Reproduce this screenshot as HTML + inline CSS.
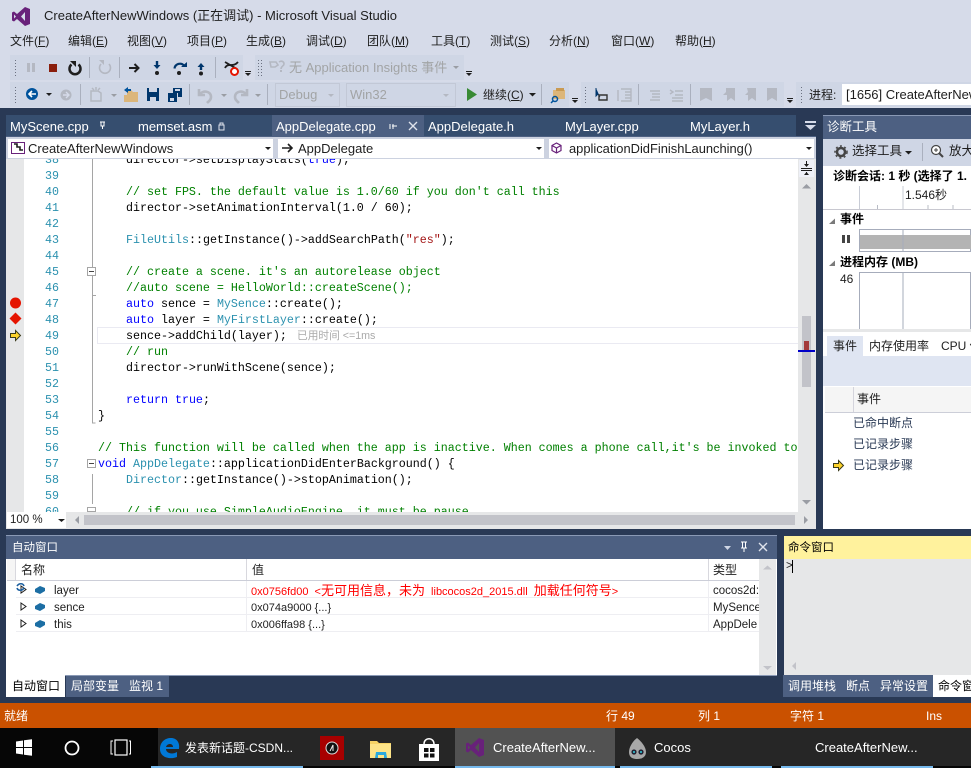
<!DOCTYPE html>
<html><head><meta charset="utf-8"><style>
html,body{margin:0;padding:0}
body{width:971px;height:768px;overflow:hidden;position:relative;background:#293955;font-family:"Liberation Sans","Noto Sans CJK SC",sans-serif;font-size:12px;color:#1e1e1e}
.b{position:absolute}
.t{position:absolute;white-space:nowrap;line-height:16px;height:16px}
u{text-decoration:underline}
.c{position:absolute;white-space:pre;font:11.67px/16px "Liberation Mono","Noto Sans CJK SC",monospace;color:#000;left:98px;width:700px;overflow:hidden}
.n{position:absolute;left:45px;font:11.67px/16px "Liberation Mono",monospace;color:#2b91af}
.g{color:#008000}.k{color:#0000ff}.y{color:#2b91af}.s{color:#a31515}
.w{color:#fff}.m{color:#1e1e1e}
.r{color:#1e1e1e;font-size:11.5px}
.v{color:#1e1e1e;font-size:11px}
#code{position:absolute;left:7px;top:159px;width:791px;height:353px;overflow:hidden;background:#e6e7e8}
#code>div{position:absolute;left:-7px;top:0;width:798px;height:353px}
</style></head><body>
<div class="b" style="left:0;top:0;width:971px;height:108px;background:#d6dbe9"></div>
<div class="b" style="left:10px;top:55px;width:454px;height:25px;background:#cfd6e5"></div>
<div class="b" style="left:243px;top:55px;width:12px;height:25px;background:#d6dbe9"></div>
<div class="b" style="left:464px;top:55px;width:10px;height:25px;background:#d6dbe9"></div>
<div class="b" style="left:10px;top:82px;width:961px;height:25px;background:#cfd6e5"></div>
<div class="b" style="left:569px;top:82px;width:12px;height:25px;background:#d6dbe9"></div>
<div class="b" style="left:784px;top:82px;width:12px;height:25px;background:#d6dbe9"></div>

<div class="t" style="left:44px;top:8px;font-size:13px">CreateAfterNewWindows (正在调试) - Microsoft Visual Studio</div>
<div class="t" style="left:10px;top:33px">文件(<u>F</u>)</div>
<div class="t" style="left:68px;top:33px">编辑(<u>E</u>)</div>
<div class="t" style="left:127px;top:33px">视图(<u>V</u>)</div>
<div class="t" style="left:187px;top:33px">项目(<u>P</u>)</div>
<div class="t" style="left:246px;top:33px">生成(<u>B</u>)</div>
<div class="t" style="left:306px;top:33px">调试(<u>D</u>)</div>
<div class="t" style="left:367px;top:33px">团队(<u>M</u>)</div>
<div class="t" style="left:431px;top:33px">工具(<u>T</u>)</div>
<div class="t" style="left:490px;top:33px">测试(<u>S</u>)</div>
<div class="t" style="left:549px;top:33px">分析(<u>N</u>)</div>
<div class="t" style="left:611px;top:33px">窗口(<u>W</u>)</div>
<div class="t" style="left:675px;top:33px">帮助(<u>H</u>)</div>
<div class="t" style="left:289px;top:60px;color:#a2a4a5;font-size:13px">无 Application Insights 事件</div>
<div class="b" style="left:275px;top:83px;width:63px;height:22px;border:1px solid #c2c8d6"></div>
<div class="b" style="left:346px;top:83px;width:108px;height:22px;border:1px solid #c2c8d6"></div>
<div class="t" style="left:279px;top:87px;color:#a2a4a5;font-size:13px">Debug</div>
<div class="t" style="left:350px;top:87px;color:#a2a4a5;font-size:13px">Win32</div>
<div class="t" style="left:483px;top:87px">继续(<u>C</u>)</div>
<div class="t" style="left:809px;top:87px">进程:</div>
<div class="b" style="left:842px;top:84px;width:129px;height:21px;background:#fff"></div>
<div class="t" style="left:846px;top:87px;font-size:13px">[1656] CreateAfterNew</div>

<!-- tabs -->
<div class="b" style="left:6px;top:115px;width:790px;height:22px;background:#364e6f"></div>
<div class="b" style="left:272px;top:115px;width:152px;height:22px;background:#4d6082"></div>
<div class="b" style="left:6px;top:136px;width:810px;height:2px;background:#4d6082"></div>
<div class="t w" style="left:10px;top:119px;font-size:13px">MyScene.cpp</div>
<div class="t w" style="left:138px;top:119px;font-size:13px">memset.asm</div>
<div class="t w" style="left:276px;top:119px;font-size:13px">AppDelegate.cpp</div>
<div class="t w" style="left:428px;top:119px;font-size:13px">AppDelegate.h</div>
<div class="t w" style="left:565px;top:119px;font-size:13px">MyLayer.cpp</div>
<div class="t w" style="left:690px;top:119px;font-size:13px">MyLayer.h</div>
<!-- nav bar -->
<div class="b" style="left:6px;top:137px;width:810px;height:23px;background:#ccd2e0"></div>
<div class="b" style="left:8px;top:139px;width:265px;height:19px;background:#fff"></div>
<div class="b" style="left:278px;top:139px;width:266px;height:19px;background:#fff"></div>
<div class="b" style="left:549px;top:139px;width:265px;height:19px;background:#fff"></div>
<div class="t" style="left:28px;top:141px;color:#1e1e1e;font-size:13px">CreateAfterNewWindows</div>
<div class="t" style="left:298px;top:141px;font-size:13px">AppDelegate</div>
<div class="t" style="left:569px;top:141px;font-size:12.9px">applicationDidFinishLaunching()</div>

<!-- editor -->
<div class="b" style="left:6px;top:159px;width:810px;height:370px;background:#e6e7e8"></div>
<div id="code"><div>
<div class="b" style="left:24px;top:0;width:774px;height:353px;background:#fff"></div>
<div class="b" style="left:97px;top:168px;width:701px;height:15px;border:1px solid #eaeaf2;border-right:0"></div>
<div class="n" style="top:-7px">38</div><div class="c" style="top:-7px">    director-&gt;setDisplayStats(<span class="k">true</span>);</div>
<div class="n" style="top:9px">39</div>
<div class="n" style="top:25px">40</div><div class="c g" style="top:25px">    // set FPS. the default value is 1.0/60 if you don't call this</div>
<div class="n" style="top:41px">41</div><div class="c" style="top:41px">    director-&gt;setAnimationInterval(1.0 / 60);</div>
<div class="n" style="top:57px">42</div>
<div class="n" style="top:73px">43</div><div class="c" style="top:73px">    <span class="y">FileUtils</span>::getInstance()-&gt;addSearchPath(<span class="s">"res"</span>);</div>
<div class="n" style="top:89px">44</div>
<div class="n" style="top:105px">45</div><div class="c g" style="top:105px">    // create a scene. it's an autorelease object</div>
<div class="n" style="top:121px">46</div><div class="c g" style="top:121px">    //auto scene = HelloWorld::createScene();</div>
<div class="n" style="top:137px">47</div><div class="c" style="top:137px">    <span class="k">auto</span> sence = <span class="y">MySence</span>::create();</div>
<div class="n" style="top:153px">48</div><div class="c" style="top:153px">    <span class="k">auto</span> layer = <span class="y">MyFirstLayer</span>::create();</div>
<div class="n" style="top:169px">49</div><div class="c" style="top:169px">    sence-&gt;addChild(layer);</div>
<div class="t" style="left:297px;top:169px;font-size:10.7px;color:#a9a9a9">已用时间 &lt;=1ms</div>
<div class="n" style="top:185px">50</div><div class="c g" style="top:185px">    // run</div>
<div class="n" style="top:201px">51</div><div class="c" style="top:201px">    director-&gt;runWithScene(sence);</div>
<div class="n" style="top:217px">52</div>
<div class="n" style="top:233px">53</div><div class="c" style="top:233px">    <span class="k">return true</span>;</div>
<div class="n" style="top:249px">54</div><div class="c" style="top:249px">}</div>
<div class="n" style="top:265px">55</div>
<div class="n" style="top:281px">56</div><div class="c g" style="top:281px">// This function will be called when the app is inactive. When comes a phone call,it's be invoked too</div>
<div class="n" style="top:297px">57</div><div class="c" style="top:297px"><span class="k">void</span> <span class="y">AppDelegate</span>::applicationDidEnterBackground() {</div>
<div class="n" style="top:313px">58</div><div class="c" style="top:313px">    <span class="y">Director</span>::getInstance()-&gt;stopAnimation();</div>
<div class="n" style="top:329px">59</div>
<div class="n" style="top:345px">60</div><div class="c g" style="top:345px">    // if you use SimpleAudioEngine, it must be pause</div>
</div></div>
<!-- zoom + hscroll -->
<div class="b" style="left:7px;top:512px;width:59px;height:16px;background:#fff"></div>
<div class="t" style="left:10px;top:512px;font-size:11.5px">100 %</div>
<div class="b" style="left:84px;top:515px;width:711px;height:10px;background:#c2c3c9"></div>
<div class="b" style="left:802px;top:316px;width:9px;height:71px;background:#c2c3c9"></div>
<div class="b" style="left:804px;top:341px;width:5px;height:11px;background:#a33b3b"></div>
<div class="b" style="left:798px;top:350px;width:17px;height:2px;background:#0000c8"></div>
<div class="b" style="left:799px;top:160px;width:15px;height:17px;background:#eef0f7"></div>

<!-- diagnostics -->
<div class="b" style="left:823px;top:115px;width:148px;height:414px;background:#fff"></div>
<div class="b" style="left:823px;top:115px;width:148px;height:24px;background:#4d6082;border-top:1px solid #8a99b5;box-sizing:border-box"></div>
<div class="t w" style="left:827px;top:119px;font-size:12.5px">诊断工具</div>
<div class="b" style="left:823px;top:139px;width:148px;height:27px;background:#cfd6e5"></div>
<div class="t" style="left:852px;top:143px;font-size:12.5px">选择工具</div>
<div class="t" style="left:949px;top:143px;font-size:12.5px">放大</div>
<div class="t" style="left:833px;top:168px;font-weight:bold;color:#000;font-size:12px">诊断会话: 1 秒 (选择了 1.</div>
<div class="t" style="left:905px;top:187px;font-size:12px">1.546秒</div>
<div class="b" style="left:823px;top:209px;width:148px;height:1px;background:#c8c8d0"></div>
<div class="t" style="left:840px;top:211px;font-weight:bold;font-size:12px;color:#000">事件</div>
<div class="b" style="left:859px;top:229px;width:112px;height:23px;border:1px solid #a6acbb;box-sizing:border-box"></div>
<div class="b" style="left:860px;top:235px;width:111px;height:14px;background:#b4b4b4"></div>
<div class="t" style="left:840px;top:254px;font-weight:bold;font-size:12px;color:#000">进程内存 (MB)</div>
<div class="t" style="left:840px;top:271px;font-size:12px">46</div>
<div class="b" style="left:859px;top:272px;width:112px;height:58px;border:1px solid #a6acbb;border-bottom:0;box-sizing:border-box"></div>
<div class="b" style="left:823px;top:329px;width:148px;height:3px;background:#e6e7e8"></div>
<div class="b" style="left:827px;top:336px;width:36px;height:20px;background:#dfe5f2"></div>
<div class="b" style="left:823px;top:356px;width:148px;height:30px;background:#dfe5f2"></div>
<div class="t" style="left:833px;top:338px;font-size:12px">事件</div>
<div class="t" style="left:869px;top:338px;font-size:12px">内存使用率</div>
<div class="t" style="left:941px;top:338px;font-size:12px">CPU 使</div>
<div class="b" style="left:825px;top:387px;width:146px;height:25px;background:#f5f5f5;border-bottom:1px solid #ccced8"></div>
<div class="b" style="left:853px;top:387px;width:1px;height:25px;background:#d4d4dc"></div>
<div class="t" style="left:857px;top:391px;font-size:12px">事件</div>
<div class="t" style="left:853px;top:415px;font-size:12px;color:#2a3a55">已命中断点</div>
<div class="t" style="left:853px;top:436px;font-size:12px;color:#2a3a55">已记录步骤</div>
<div class="t" style="left:853px;top:457px;font-size:12px;color:#2a3a55">已记录步骤</div>

<!-- autos -->
<div class="b" style="left:6px;top:535px;width:771px;height:141px;background:#fff"></div>
<div class="b" style="left:6px;top:535px;width:771px;height:24px;background:#4d6082;border-top:1px solid #8a99b5;box-sizing:border-box"></div>
<div class="t w" style="left:12px;top:540px;font-size:11.5px">自动窗口</div>
<div class="b" style="left:7px;top:559px;width:8px;height:21px;background:#f5f5f5"></div>
<div class="b" style="left:759px;top:559px;width:17px;height:116px;background:#e6e7e8"></div>
<div class="b" style="left:7px;top:580px;width:752px;height:1px;background:#ccced8"></div>
<div class="b" style="left:15px;top:559px;width:1px;height:21px;background:#d8d8de"></div>
<div class="b" style="left:246px;top:559px;width:1px;height:21px;background:#d8d8de"></div>
<div class="b" style="left:708px;top:559px;width:1px;height:21px;background:#d8d8de"></div>
<div class="b" style="left:246px;top:581px;width:1px;height:50px;background:#eeeef2"></div>
<div class="b" style="left:708px;top:581px;width:1px;height:50px;background:#eeeef2"></div>
<div class="b" style="left:16px;top:597px;width:743px;height:1px;background:#eeeef2"></div>
<div class="b" style="left:16px;top:614px;width:743px;height:1px;background:#eeeef2"></div>
<div class="b" style="left:16px;top:631px;width:743px;height:1px;background:#eeeef2"></div>
<div class="t" style="left:21px;top:562px;font-size:12px">名称</div>
<div class="t" style="left:252px;top:562px;font-size:12px">值</div>
<div class="t" style="left:713px;top:562px;font-size:12px">类型</div>
<div class="t r" style="left:54px;top:583px">layer</div>
<div class="t r" style="left:54px;top:600px">sence</div>
<div class="t r" style="left:54px;top:617px">this</div>
<div class="t" style="left:251px;top:583px;color:#f00;font-size:11px;word-spacing:3px">0x0756fd00 &lt;<span style="font-size:13px">无可用信息，未为</span> libcocos2d_2015.dll <span style="font-size:13px">加载任何符号</span>&gt;</div>
<div class="t v" style="left:251px;top:600px">0x074a9000 {...}</div>
<div class="t v" style="left:251px;top:617px">0x006ffa98 {...}</div>
<div class="b" style="left:713px;top:583px;width:46px;height:14px;overflow:hidden"><div class="t r" style="left:0;top:0">cocos2d::</div></div>
<div class="b" style="left:713px;top:600px;width:46px;height:14px;overflow:hidden"><div class="t r" style="left:0;top:0">MySence</div></div>
<div class="b" style="left:713px;top:617px;width:46px;height:14px;overflow:hidden"><div class="t r" style="left:0;top:0">AppDele</div></div>
<div class="b" style="left:66px;top:676px;width:103px;height:21px;background:#4d6082"></div>
<div class="b" style="left:6px;top:675px;width:771px;height:1px;background:#8a99b5"></div>
<div class="b" style="left:6px;top:675px;width:59px;height:22px;background:#fff"></div>
<div class="t" style="left:12px;top:678px;font-size:12px;color:#000">自动窗口</div>
<div class="t w" style="left:71px;top:678px;font-size:12px">局部变量</div>
<div class="t w" style="left:129px;top:678px;font-size:12px">监视 1</div>

<!-- command -->
<div class="b" style="left:784px;top:536px;width:187px;height:23px;background:#fff29d"></div>
<div class="t" style="left:788px;top:540px;font-size:11.5px;color:#000">命令窗口</div>
<div class="b" style="left:784px;top:559px;width:187px;height:116px;background:#e6e7e8"></div>
<div class="t" style="left:786px;top:558px;font-size:11.5px">&gt;</div>
<div class="b" style="left:792px;top:560px;width:1px;height:13px;background:#000"></div>
<div class="b" style="left:783px;top:675px;width:150px;height:22px;background:#4d6082"></div>
<div class="b" style="left:933px;top:675px;width:38px;height:22px;background:#fff"></div>
<div class="t w" style="left:788px;top:678px;font-size:12px">调用堆栈</div>
<div class="t w" style="left:846px;top:678px;font-size:12px">断点</div>
<div class="t w" style="left:880px;top:678px;font-size:12px">异常设置</div>
<div class="t" style="left:938px;top:678px;font-size:12px;color:#000">命令窗</div>

<!-- status -->
<div class="b" style="left:0;top:703px;width:971px;height:25px;background:#ca5100"></div>
<div class="t w" style="left:4px;top:708px;font-size:12px">就绪</div>
<div class="t w" style="left:606px;top:708px;font-size:12px">行 49</div>
<div class="t w" style="left:698px;top:708px;font-size:12px">列 1</div>
<div class="t w" style="left:790px;top:708px;font-size:12px">字符 1</div>
<div class="t w" style="left:926px;top:708px;font-size:12px">Ins</div>

<!-- taskbar -->
<div class="b" style="left:0;top:728px;width:971px;height:40px;background:#060606"></div>
<div class="b" style="left:158px;top:728px;width:813px;height:38px;background:#262626"></div>
<div class="b" style="left:455px;top:728px;width:160px;height:38px;background:#525252"></div>
<div class="b" style="left:151px;top:766px;width:152px;height:2px;background:#76b9ed"></div>
<div class="b" style="left:455px;top:766px;width:160px;height:2px;background:#76b9ed"></div>
<div class="b" style="left:620px;top:766px;width:152px;height:2px;background:#76b9ed"></div>
<div class="b" style="left:781px;top:766px;width:152px;height:2px;background:#76b9ed"></div>
<div class="t w" style="left:185px;top:740px;font-size:12px">发表新话题-CSDN...</div>
<div class="t w" style="left:493px;top:740px;font-size:13px">CreateAfterNew...</div>
<div class="t w" style="left:654px;top:740px;font-size:13px">Cocos</div>
<div class="t w" style="left:815px;top:740px;font-size:13px">CreateAfterNew...</div>

<svg class="b" style="left:0;top:0" width="971" height="768" viewBox="0 0 971 768">
<defs>
<pattern id="gr" width="3" height="3" patternUnits="userSpaceOnUse"><rect width="1" height="1" fill="#6b7180"/></pattern>
<g id="vs"><path fill-rule="evenodd" d="M13 0 18 2V17L13 19 5 12 2 14.500 0 13.500V5.500L2 4.500 5 7ZM2 7.500V11.500L4 9.500ZM13 5 9 9.500 13 14Z" fill="#68217a"/></g>
<g id="arrowy"><path d="M.5 3.500h5V.5L10.500 5.500l-5 5v-3h-5z" fill="#fcd22b" stroke="#3a3a1a" stroke-width="1"/></g>
</defs>
<use href="#vs" x="12" y="7"/>
<!-- grips -->
<rect x="13" y="58" width="4" height="19" fill="url(#gr)"/><rect x="258" y="58" width="4" height="19" fill="url(#gr)"/>
<rect x="13" y="85" width="4" height="19" fill="url(#gr)"/><rect x="584" y="85" width="4" height="19" fill="url(#gr)"/><rect x="799" y="85" width="4" height="19" fill="url(#gr)"/>
<!-- toolbar 1 -->
<rect x="27" y="63" width="3" height="9" fill="#b4b8c2"/><rect x="32" y="63" width="3" height="9" fill="#b4b8c2"/>
<rect x="49" y="64" width="8" height="8" fill="#8a1e0c"/>
<path d="M71.500 64.500a5.500 5.500 0 1 0 7 0" fill="none" stroke="#1e1e1e" stroke-width="2.500"/><path d="M70 61h6v6z" fill="#1e1e1e"/>
<path d="M101 64a5.500 5.500 0 1 0 8 0" fill="none" stroke="#b4b8c2" stroke-width="1.600"/><path d="M99 60h5v5z" fill="#b4b8c2"/>
<g stroke="#aab0be"><path d="M89.500 57v21M119.500 57v21M215.500 57v21"/></g>
<path d="M129 68h9M134.500 64l4 4-4 4" fill="none" stroke="#1e1e1e" stroke-width="2"/>
<path d="M157 61v5" stroke="#00366c" stroke-width="2.400"/><path d="M153.500 65h7l-3.500 4z" fill="#00366c"/><circle cx="157" cy="73" r="2" fill="#1e1e1e"/>
<path d="M174.500 68.500a5.500 5.500 0 0 1 9.500-3" fill="none" stroke="#00366c" stroke-width="2.200"/><path d="M181 67h6v-5z" fill="#00366c"/><circle cx="179" cy="73" r="2" fill="#1e1e1e"/>
<path d="M201 70v-4" stroke="#00366c" stroke-width="2.400"/><path d="M197.500 67h7l-3.500-4z" fill="#00366c"/><circle cx="201" cy="73.500" r="2" fill="#1e1e1e"/>
<path d="M225 62l12 7M225 68c3-6 8 0 13-6" fill="none" stroke="#1e1e1e" stroke-width="1.800"/><circle cx="234.500" cy="71.500" r="3.500" fill="#fff" stroke="#e51400" stroke-width="2"/>
<rect x="245" y="71" width="6" height="1" fill="#1e1e1e"/><path d="M245 73h6l-3 3z" fill="#1e1e1e"/>
<rect x="466" y="71" width="6" height="1" fill="#1e1e1e"/><path d="M466 73h6l-3 3z" fill="#1e1e1e"/>
<path d="M270 62h6l2 3-3 2h-4zM279 62c3-2 5 0 5 2s-3 2-3 5" fill="none" stroke="#b4b8c2" stroke-width="1.600"/><rect x="280" y="70" width="2" height="2" fill="#b4b8c2"/>
<path d="M453 66h6l-3 3z" fill="#9a9da4"/>
<!-- toolbar 2 -->
<circle cx="32" cy="94" r="6" fill="#00539c"/><path d="M36 94h-6M32 91l-3 3 3 3" fill="none" stroke="#fff" stroke-width="1.600"/>
<path d="M46 93h6l-3 3z" fill="#1e1e1e"/>
<circle cx="66" cy="95" r="5.500" fill="#b4b8c2"/><path d="M63 95h6M66 92l3 3-3 3" fill="none" stroke="#d6dbe9" stroke-width="1.400"/>
<g stroke="#aab0be"><path d="M80.500 84v21M189.500 84v21M267.500 84v21M541.500 84v21M638.500 84v21M690.500 84v21"/></g>
<path d="M91 91h7l3 2v8h-10zM96 87v3M92 88l2 2M100 88l-2 2" fill="none" stroke="#b4b8c2" stroke-width="1.500"/>
<path d="M111 94h6l-3 3z" fill="#9a9da4"/>
<path d="M127 90h4l2 2h5v3h-11z" fill="#dcb67a"/><path d="M124 102v-7h14v7z" fill="#dcb67a"/><path d="M124 90l4-3v2h3v2h-3v2z" fill="#00539c"/>
<path d="M147 88h12v13h-12z" fill="#00366c"/><rect x="149" y="88" width="8" height="4" fill="#cfd6e5"/><rect x="150" y="97" width="6" height="4" fill="#cfd6e5"/>
<path d="M168 93h9v9h-9z" fill="#00366c"/><path d="M173 88h9v9h-4v-4h-5z" fill="#00366c"/><rect x="170" y="98" width="4" height="3" fill="#cfd6e5"/><rect x="175" y="89" width="5" height="2" fill="#cfd6e5"/>
<path d="M199 89v6h6" fill="none" stroke="#b4b8c2" stroke-width="2.600"/><path d="M200 94c3-4 11-3 11 3 0 3-2 4-4 6" fill="none" stroke="#b4b8c2" stroke-width="2.600"/>
<path d="M221 94h6l-3 3z" fill="#9a9da4"/>
<path d="M247 89v6h-6" fill="none" stroke="#b4b8c2" stroke-width="2.600"/><path d="M246 94c-3-4-11-3-11 3 0 3 2 4 4 6" fill="none" stroke="#b4b8c2" stroke-width="2.600"/>
<path d="M255 94h6l-3 3z" fill="#9a9da4"/>
<path d="M328 94h6l-3 3z" fill="#b4b8c2"/><path d="M443 94h6l-3 3z" fill="#b4b8c2"/>
<path d="M467 88l10 6.500-10 6.500z" fill="#388a34"/>
<path d="M529 93h7l-3.500 3.500z" fill="#1e1e1e"/>
<rect x="553" y="90" width="12" height="9" fill="#dcb67a"/><rect x="556" y="88" width="8" height="3" fill="#c99a52"/><circle cx="555" cy="99" r="2.500" fill="none" stroke="#00539c" stroke-width="1.500"/><path d="M553 101l-2 2" stroke="#00539c" stroke-width="1.500"/>
<rect x="572" y="98" width="6" height="1" fill="#1e1e1e"/><path d="M572 100h6l-3 3z" fill="#1e1e1e"/>
<rect x="787" y="98" width="6" height="1" fill="#1e1e1e"/><path d="M787 100h6l-3 3z" fill="#1e1e1e"/>
<path d="M596 88v8l2-2 2 3" fill="#00366c" stroke="#00366c"/><path d="M599 95h8v5h-8z" fill="none" stroke="#333" stroke-width="1.400"/>
<g fill="none" stroke="#b4b8c2" stroke-width="1.400"><path d="M618 90v11M621 89h10v12h-10M625 92h6M625 95h6M625 98h6"/><path d="M650 91h10M652 94h8M652 97h8M650 100h10"/><path d="M670 90l3 2-3 2M675 91h8M675 95h8M672 98h11M672 101h11"/></g>
<path d="M700 88h12v13l-6-3-6 3z" fill="#b4b8c2"/><path d="M726 88h9v13l-4-3-4 3v-6h-4l3-3z" fill="#b4b8c2"/><path d="M747 88h9v13l-4-3-4 3v-6h-3l3-3z" fill="#b4b8c2"/><path d="M767 88h10v13l-5-3-5 3z" fill="#b4b8c2"/>
<!-- tab icons -->
<path d="M100 122h5M101 122v4h3v-4M102.500 126v3" fill="none" stroke="#fff"/>
<path d="M219 125h5v5h-5zM220 125v-2h3v2" fill="none" stroke="#dfe3ec"/>
<path d="M390 124v5M392 126h5M393 124v5" stroke="#fff" fill="none"/>
<path d="M409 122l8 8M417 122l-8 8" stroke="#dfe3ec" stroke-width="1.400"/>
<path d="M805 121h11v2h-11z" fill="#d6dbe9"/><path d="M805 125h11l-5.500 5z" fill="#d6dbe9"/>
<!-- combo -->
<rect x="11.500" y="142.500" width="13" height="11" fill="#fff" stroke="#68217a"/><path d="M14 144h3v3h3v3h3" fill="none" stroke="#1e1e1e" stroke-width="1.600"/>
<path d="M282 148h9M288 144l4 4-4 4" fill="none" stroke="#1e1e1e" stroke-width="1.600"/>
<path d="M556.500 143l4.500 2.500v5L556.500 153l-4.500-2.500v-5z M552 145.500l4.500 2.500 4.500-2.500M556.500 148v5" fill="none" stroke="#68217a" stroke-width="1.200"/>
<path d="M265 147h6l-3 3z" fill="#1e1e1e"/><path d="M536 147h6l-3 3z" fill="#1e1e1e"/><path d="M806 147h6l-3 3z" fill="#1e1e1e"/>
<!-- editor glyph -->
<circle cx="15.500" cy="303" r="5.500" fill="#e51400"/>
<path d="M15.500 312.500l6 6-6 6-6-6z" fill="#e51400"/>
<use href="#arrowy" x="10" y="330"/>
<path d="M92.500 159v264h3" fill="none" stroke="#a5a5a5"/><path d="M92.500 474v30" fill="none" stroke="#a5a5a5"/><path d="M92 295.500h4" stroke="#a5a5a5"/>
<g fill="#fff" stroke="#a5a5a5"><rect x="87.500" y="267.500" width="8" height="8"/><rect x="87.500" y="459.500" width="8" height="8"/><rect x="87.500" y="507.500" width="8" height="4"/></g>
<path d="M89 271.500h5M89 463.500h5" stroke="#444"/>
<!-- scroll -->
<path d="M802 188.500l4.500-4.500 4.500 4.500z" fill="#9a9da4"/>
<path d="M802 500h9l-4.500 4.500z" fill="#9a9da4"/>
<path d="M801 168.500h11M801 170.500h11" stroke="#1e1e1e"/><path d="M806.500 161v4M806.500 175v-3" stroke="#1e1e1e"/><path d="M804 164h5l-2.500 3zM804 175h5l-2.500-3z" fill="#1e1e1e"/>
<path d="M79 516v8l-4-4z" fill="#9a9da4"/><path d="M804 516v8l4-4z" fill="#9a9da4"/>
<path d="M58 519h7l-3.500 3z" fill="#1e1e1e"/>
<!-- diagnostics -->
<circle cx="841" cy="152" r="4" fill="none" stroke="#444" stroke-width="2.500"/><circle cx="841" cy="152" r="6" fill="none" stroke="#444" stroke-width="1.500" stroke-dasharray="2 2.500"/>
<path d="M905 151h7l-3.500 3.500z" fill="#1e1e1e"/><path d="M922.500 143v18" stroke="#aab0be"/>
<circle cx="936" cy="150" r="4.500" fill="#fff" stroke="#444" stroke-width="1.200"/><path d="M939 153l4 4" stroke="#444" stroke-width="2"/><path d="M934 150h4M936 148v4" stroke="#444"/>
<path d="M859.500 186v23M903 186v23" stroke="#c8ccd6"/>
<path d="M877.500 205v4M928 205v4M953 205v4" stroke="#b8bcc6"/>
<path d="M829 224l6-5.500v5.500z" fill="#7a7a7a"/><path d="M829 266l6-5.500v5.500z" fill="#7a7a7a"/>
<rect x="842" y="235" width="3" height="8" fill="#444"/><rect x="847" y="235" width="3" height="8" fill="#444"/>
<path d="M903 229v23M903 272v57" stroke="#a6acbb"/>
<use href="#arrowy" x="833" y="460"/>
<!-- autos title -->
<path d="M724 546h7l-3.500 4z" fill="#cfd6e5"/>
<path d="M741 542h6M742.500 542v6h3v-6M741 548h6M744 548v4" fill="none" stroke="#fff"/>
<path d="M759 543l8 8M767 543l-8 8" stroke="#dfe3ec" stroke-width="1.400"/>
<path d="M763 569.500l4.500-4 4.500 4z" fill="#c2c3c9"/><path d="M763 666l4.500 4 4.500-4z" fill="#c2c3c9"/>
<path d="M21 586l5 3.500-5 3.500zM21 603l5 3.500-5 3.500zM21 620l5 3.500-5 3.500z" fill="#fff" stroke="#1e1e1e"/>
<g fill="#1c6ea4"><path d="M35 589l5-3 5 2v3l-5 3-5-2z"/><path d="M35 606l5-3 5 2v3l-5 3-5-2z"/><path d="M35 623l5-3 5 2v3l-5 3-5-2z"/></g>
<path d="M17 586c2-3 6-3 7 0M24 588c-2 3-6 3-7 0" fill="none" stroke="#1c5fa0" stroke-width="1.600"/>
<!-- cmd scroll -->
<path d="M796 662v8l-4-4z" fill="#c2c3c9"/>
<!-- taskbar icons -->
<path d="M16 741.500l7-1v6.500h-7zM24 740.300l8-1.100V747h-8zM16 748h7v6.500l-7-1zM24 748h8v7.800l-8-1.100z" fill="#fff"/>
<circle cx="72" cy="748" r="6.500" fill="none" stroke="#fff" stroke-width="1.800"/>
<path d="M113 741h-2v13h2M129 741h1.500v13H129" fill="none" stroke="#fff"/><rect x="115" y="740" width="12" height="15" fill="none" stroke="#fff" stroke-width="1.200"/>
<path d="M160 749c0-7 5-11 11-11 6 0 9 5 8 11h-13c0 4 6 6 11 3v5c-8 3-17 0-17-8zm6-2h7c0-4-6-4-7 0z" fill="#0078d7"/>
<rect x="320" y="736" width="24" height="24" fill="#a80000"/><circle cx="332" cy="748" r="6" fill="#111" stroke="#ddd"/><path d="M330 751l3-6v6" stroke="#eee" fill="none"/>
<path d="M370 741h7l2 2h12v15h-21z" fill="#f6d365"/><rect x="370" y="744" width="21" height="14" fill="#fde488"/><path d="M375 758l1-6h10l1 6h-3v-3h-6v3z" fill="#2aa9dd"/>
<path d="M419 744h20v17h-20z" fill="#fff"/><path d="M424 744c0-7 10-7 10 0" fill="none" stroke="#fff" stroke-width="1.500"/><path d="M424 748h4.500v4H424zM430 748h4.500v4H430zM424 753.500h4.500v4H424zM430 753.500h4.500v4H430z" fill="#111"/>
<use href="#vs" x="466" y="738"/>
<path d="M637 738c4 3 9 9 9 14 0 5-4 7-9 7s-8-2-8-7c0-5 4-11 8-14z" fill="#a8a8a8"/><circle cx="634" cy="752" r="2.600" fill="#223"/><circle cx="641" cy="752" r="2.600" fill="#223"/><circle cx="634" cy="752" r="1" fill="#3cd"/><circle cx="641" cy="752" r="1" fill="#3cd"/>
</svg>
</body></html>
